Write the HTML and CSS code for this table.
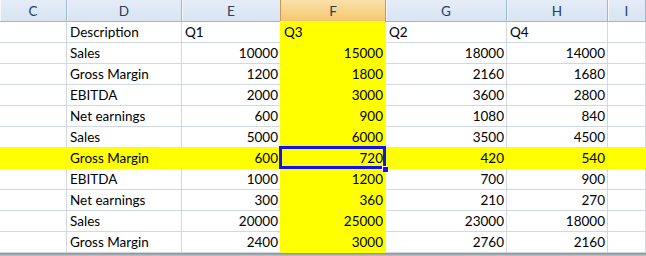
FILE: index.html
```html
<!DOCTYPE html>
<html lang="en">
<head>
    <meta charset="UTF-8">
    <meta name="viewport" content="width=device-width, initial-scale=1.0">
    <title>Quarterly figures</title>
    <link rel="stylesheet" href="styles.css">
</head>
<body>

    <div class="sheet">
        <!-- column headers -->
        <div class="col-head">C</div>
        <div class="col-head">D</div>
        <div class="col-head">E</div>
        <div class="col-head picked">F</div>
        <div class="col-head">G</div>
        <div class="col-head">H</div>
        <div class="col-head">I</div>

        <div class="cell"></div>
        <div class="cell">Description</div>
        <div class="cell">Q1</div>
        <div class="cell fill">Q3</div>
        <div class="cell">Q2</div>
        <div class="cell">Q4</div>
        <div class="cell"></div>

        <div class="cell"></div>
        <div class="cell">Sales</div>
        <div class="cell num">10000</div>
        <div class="cell num fill">15000</div>
        <div class="cell num">18000</div>
        <div class="cell num">14000</div>
        <div class="cell"></div>

        <div class="cell"></div>
        <div class="cell">Gross Margin</div>
        <div class="cell num">1200</div>
        <div class="cell num fill">1800</div>
        <div class="cell num">2160</div>
        <div class="cell num">1680</div>
        <div class="cell"></div>

        <div class="cell"></div>
        <div class="cell">EBITDA</div>
        <div class="cell num">2000</div>
        <div class="cell num fill">3000</div>
        <div class="cell num">3600</div>
        <div class="cell num">2800</div>
        <div class="cell"></div>

        <div class="cell"></div>
        <div class="cell">Net earnings</div>
        <div class="cell num">600</div>
        <div class="cell num fill">900</div>
        <div class="cell num">1080</div>
        <div class="cell num">840</div>
        <div class="cell"></div>

        <div class="cell"></div>
        <div class="cell">Sales</div>
        <div class="cell num">5000</div>
        <div class="cell num fill">6000</div>
        <div class="cell num">3500</div>
        <div class="cell num">4500</div>
        <div class="cell"></div>

        <div class="cell fill"></div>
        <div class="cell fill">Gross Margin</div>
        <div class="cell num fill">600</div>
        <div class="cell num fill active">720</div>
        <div class="cell num fill">420</div>
        <div class="cell num fill">540</div>
        <div class="cell fill"></div>

        <div class="cell"></div>
        <div class="cell">EBITDA</div>
        <div class="cell num">1000</div>
        <div class="cell num fill">1200</div>
        <div class="cell num">700</div>
        <div class="cell num">900</div>
        <div class="cell"></div>

        <div class="cell"></div>
        <div class="cell">Net earnings</div>
        <div class="cell num">300</div>
        <div class="cell num fill">360</div>
        <div class="cell num">210</div>
        <div class="cell num">270</div>
        <div class="cell"></div>

        <div class="cell"></div>
        <div class="cell">Sales</div>
        <div class="cell num">20000</div>
        <div class="cell num fill">25000</div>
        <div class="cell num">23000</div>
        <div class="cell num">18000</div>
        <div class="cell"></div>

        <div class="cell"></div>
        <div class="cell">Gross Margin</div>
        <div class="cell num">2400</div>
        <div class="cell num fill">3000</div>
        <div class="cell num">2760</div>
        <div class="cell num">2160</div>
        <div class="cell"></div>
    </div>
    <div class="edge"></div>

</body>
</html>
```

FILE: styles.css
```css
body {
    margin: 0;
    background-color: #ffffff;
    font-family: Lato, "Liberation Sans", sans-serif;
    font-size: 13.5px;
    color: #000000;
}

.sheet {
    display: grid;
    grid-template-columns: 67px 115px 99px 105px 121px 101px 38px;
    grid-template-rows: 22px;
    grid-auto-rows: 21px;
}

.col-head {
    box-sizing: border-box;
    text-align: center;
    line-height: 19px;
    padding-top: 2px;
    color: #27405e;
    background: linear-gradient(#e4ecf7, #d9e4f2);
    border-right: 1px solid #9eb6ce;
    border-bottom: 1px solid #9eb6ce;
    box-shadow: inset 1px 0 0 #f4f7fb;
}

.col-head.picked {
    background: linear-gradient(#fbe0a9, #f4c870);
    border-right-color: #c29a55;
    border-bottom-color: #c29a55;
    box-shadow: -1px 0 0 #c29a55;
}

.cell {
    box-sizing: border-box;
    border-right: 1px solid #d0d7e5;
    border-bottom: 1px solid #d0d7e5;
    line-height: 19px;
    padding: 1px 3px 0 3px;
    white-space: nowrap;
    overflow: hidden;
}

.num {
    text-align: right;
    padding-right: 2px;
}

/* filled cells hide the gridlines around them */
.fill {
    background-color: #ffff00;
    border-color: #ffff00;
    box-shadow: -1px -1px 0 #ffff00;
}

.active {
    position: relative;
    overflow: visible;
}

.active::before {
    content: "";
    position: absolute;
    top: -2px;
    left: -2px;
    right: -1px;
    bottom: -1px;
    border: 3px solid #1212f0;
}

/* fill handle */
.active::after {
    content: "";
    position: absolute;
    right: -3px;
    bottom: -4px;
    width: 5px;
    height: 5px;
    background-color: #1212f0;
    box-shadow: -1px -1px 0 #ffffff;
}

.edge {
    height: 4px;
    background: linear-gradient(#8c8c8c, #d8d8d8);
}
```
